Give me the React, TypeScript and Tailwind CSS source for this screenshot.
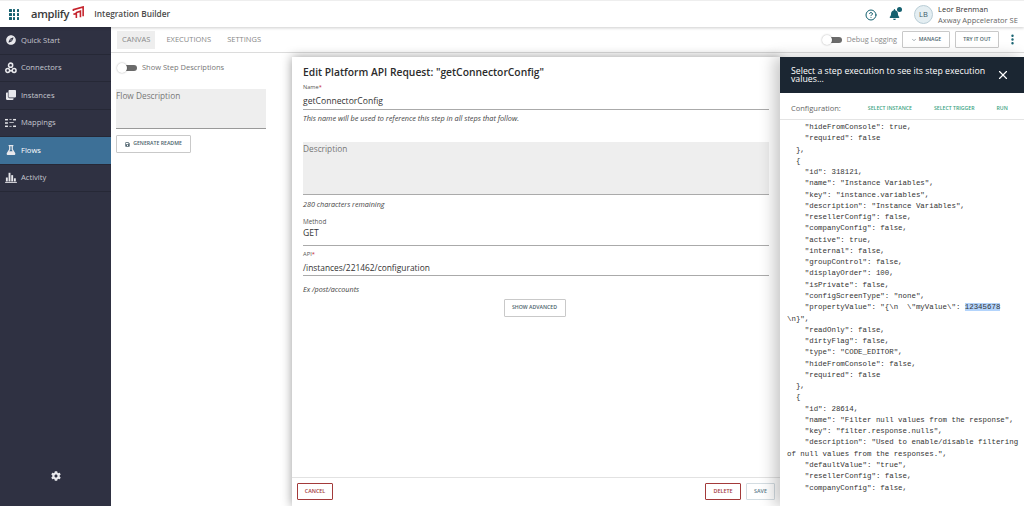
import React from 'react';
import { CircleHelp, X, ChevronDown, EllipsisVertical } from 'lucide-react';
import { FaBell, FaCompass, FaFlask, FaClone, FaCog, FaSave } from 'react-icons/fa';

const GridIcon = () => (
    <div className="grid grid-cols-3 gap-[1.5px] w-[10px]">
        {Array.from({ length: 9 }).map((_, i) => (
            <div key={i} className="w-[2.5px] h-[2.5px] bg-[#14606f] rounded-[0.5px]" />
        ))}
    </div>
);

const AmplifyMark = () => (
    <svg width="13" height="13" viewBox="0 0 13 14" fill="none" stroke="#c5232c" strokeWidth="1.7">
        <path d="M1 5.5 L1 4 L11.5 1 L11.5 11" />
        <path d="M1 9 L4.2 8.2 M4.2 13 L4.2 7 L8.6 5.6 L8.6 12" />
    </svg>
);

const ConnectorsIcon = () => (
    <svg width="12" height="12" viewBox="0 0 15 15" fill="none" stroke="#e8e8ec" strokeWidth="1.9">
        <circle cx="7" cy="4" r="2.6" />
        <circle cx="3.4" cy="10.6" r="2.4" />
        <circle cx="11.4" cy="10.6" r="2.4" />
        <path d="M5.6 11 H9" />
    </svg>
);

const MappingsIcon = () => (
    <svg width="11" height="10" viewBox="0 0 15 13" fill="#e8e8ec">
        <rect x="0" y="1" width="4" height="2" />
        <rect x="0" y="5.5" width="4" height="2" />
        <rect x="0" y="10" width="4" height="2" />
        <rect x="11" y="1" width="4" height="2" />
        <rect x="11" y="10" width="4" height="2" />
        <rect x="6" y="1" width="3" height="1" />
        <rect x="6" y="5.5" width="6" height="1" />
        <rect x="6" y="10.5" width="3" height="1" />
    </svg>
);

const ActivityIcon = () => (
    <svg width="12" height="11" viewBox="0 0 15 14" fill="#e8e8ec">
        <rect x="1" y="7" width="2.4" height="5" />
        <rect x="4.4" y="1" width="2.4" height="11" />
        <rect x="7.8" y="4" width="2.4" height="8" />
        <rect x="11.2" y="8" width="2.4" height="4" />
        <rect x="0" y="12.6" width="15" height="1.2" />
    </svg>
);

const navItems = [
    { label: 'Quick Start', icon: <FaCompass size={10} color="#e8e8ec" /> },
    { label: 'Connectors', icon: <ConnectorsIcon /> },
    { label: 'Instances', icon: <FaClone size={10} color="#e8e8ec" /> },
    { label: 'Mappings', icon: <MappingsIcon /> },
    { label: 'Flows', icon: <FaFlask size={10} color="#e8e8ec" />, active: true },
    { label: 'Activity', icon: <ActivityIcon /> },
];

const Toggle = () => (
    <div className="relative w-[20px] h-[10px] shrink-0">
        <div className="absolute right-0 top-[2px] w-[14px] h-[6px] bg-[#6b6b6b] rounded-r-[3px]" />
        <div className="absolute left-0 top-0 w-[10px] h-[10px] bg-white rounded-full shadow-[0_0_2px_rgba(0,0,0,0.35)]" />
    </div>
);

const jsonLines = [
    '    "hideFromConsole": true,',
    '    "required": false',
    '  },',
    '  {',
    '    "id": 318121,',
    '    "name": "Instance Variables",',
    '    "key": "instance.variables",',
    '    "description": "Instance Variables",',
    '    "resellerConfig": false,',
    '    "companyConfig": false,',
    '    "active": true,',
    '    "internal": false,',
    '    "groupControl": false,',
    '    "displayOrder": 100,',
    '    "isPrivate": false,',
    '    "configScreenType": "none",',
    'HIGHLIGHT',
    '\\n}",',
    '    "readOnly": false,',
    '    "dirtyFlag": false,',
    '    "type": "CODE_EDITOR",',
    '    "hideFromConsole": false,',
    '    "required": false',
    '  },',
    '  {',
    '    "id": 28614,',
    '    "name": "Filter null values from the response",',
    '    "key": "filter.response.nulls",',
    '    "description": "Used to enable/disable filtering',
    'of null values from the responses.",',
    '    "defaultValue": "true",',
    '    "resellerConfig": false,',
    '    "companyConfig": false,',
];

const Required = () => <span className="text-[#c5232c]">*</span>;

const App = () => {
    return (
        <div className="relative w-[1024px] h-[506px] overflow-hidden bg-white text-[#444] font-['Open_Sans',sans-serif]">
            {/* Top bar */}
            <div className="h-[27px] pt-[1px] flex items-center bg-white border-t border-[#eeeeee] shadow-[0_1px_3px_rgba(0,0,0,0.2)] relative z-10">
                <div className="ml-[9px] w-[22px]"><GridIcon /></div>
                <span className="text-[11.2px] font-semibold text-[#3a3a3a] tracking-[-0.3px] -mt-[1px]">amplify</span>
                <div className="ml-[3px] -mt-[4px]"><AmplifyMark /></div>
                <span className="ml-[9px] text-[8.3px] font-semibold text-[#4a4a4a]">Integration Builder</span>
                <div className="ml-auto flex items-center">
                    <CircleHelp size={12} color="#14606f" strokeWidth={2} />
                    <div className="relative ml-[12px]">
                        <FaBell size={11} color="#14606f" />
                        <div className="absolute -top-[2px] -right-[2px] w-[5px] h-[5px] rounded-full bg-[#14606f]" />
                    </div>
                    <div className="ml-[14px] w-[19px] h-[19px] rounded-full bg-[#e4eef2] border border-[#b9cdd6] flex items-center justify-center text-[7.5px] text-[#3a5a68]">LB</div>
                    <div className="ml-[5px] mr-[3px] w-[83px] flex flex-col leading-[10.5px]">
                        <span className="text-[7.5px] text-[#333]">Leor Brenman</span>
                        <span className="text-[7.5px] text-[#666]">Axway Appcelerator SE</span>
                    </div>
                </div>
            </div>

            <div className="flex h-[479px]">
                {/* Sidebar */}
                <div className="w-[111px] shrink-0 bg-[#2f3142] flex flex-col relative">
                    {navItems.map((item) => (
                        <div key={item.label} className={`h-[27.5px] flex items-center border-b border-[#262836] ${item.active ? 'bg-[#3d7097]' : ''}`}>
                            <div className="w-[21px] flex justify-center shrink-0">{item.icon}</div>
                            <span className={`text-[7.6px] ${item.active ? 'text-white' : 'text-[#c6c8d0]'}`}>{item.label}</span>
                        </div>
                    ))}
                    <div className="mt-auto mb-[25px] flex justify-center">
                        <FaCog size={10} color="#e8e8ec" />
                    </div>
                </div>

                {/* Main */}
                <div className="flex-1 flex flex-col min-w-0">
                    <div className="h-[26px] flex items-center border-b border-[#dcdcdc] pl-[6px]">
                        <div className="h-[18px] px-[5px] flex items-center bg-[#eeeeee] text-[7.5px] text-[#888]">CANVAS</div>
                        <div className="ml-[11px] text-[7.5px] text-[#888]">EXECUTIONS</div>
                        <div className="ml-[16px] text-[7.5px] text-[#888]">SETTINGS</div>
                        <div className="ml-auto flex items-center mr-[8px]">
                            <Toggle />
                            <span className="ml-[4px] text-[7.3px] text-[#888]">Debug Logging</span>
                            <div className="ml-[5px] w-[48px] h-[17px] border border-[#c9c9c9] rounded-[1px] flex items-center justify-center gap-[2px] text-[5.2px] font-semibold text-[#4a5f6a]">
                                <ChevronDown size={6} color="#4a5f6a" />MANAGE
                            </div>
                            <div className="ml-[5px] w-[44px] h-[17px] border border-[#c9c9c9] rounded-[1px] flex items-center justify-center text-[5.2px] font-semibold text-[#4a5f6a]">TRY IT OUT</div>
                            <EllipsisVertical size={13} color="#14606f" strokeWidth={2.5} className="ml-[7px] -mr-[3px]" />
                        </div>
                    </div>

                    {/* Canvas side panel */}
                    <div className="pl-[5px] pt-[9px]">
                        <div className="flex items-center">
                            <div className="ml-[1px]"><Toggle /></div>
                            <span className="ml-[5px] text-[7.5px] text-[#777]">Show Step Descriptions</span>
                        </div>
                        <div className="mt-[16px] w-[150px] h-[40px] bg-[#eeeeee] border-b border-[#999] pt-[1px] text-[8.3px] text-[#777]">Flow Description</div>
                        <div className="mt-[6px] w-[75px] h-[18px] border border-[#c9c9c9] rounded-[1px] flex items-center justify-center gap-[3px] text-[5.2px] font-semibold text-[#4a5f6a]">
                            <FaSave size={5} color="#4a5f6a" />GENERATE README
                        </div>
                    </div>
                </div>
            </div>

            {/* Edit step modal */}
            <div className="absolute left-[292px] right-[244px] top-[57px] bottom-0 bg-white shadow-[0_0_10px_rgba(0,0,0,0.4)] flex flex-col">
                <div className="flex-1 px-[11px] pt-[8px]">
                    <div className="text-[10.3px] font-semibold text-[#2b2b2b] leading-[15px]">Edit Platform API Request: "getConnectorConfig"</div>
                    <div className="mt-[3px] text-[5.6px] text-[#555] leading-[8px]">Name<Required /></div>
                    <div className="mt-[4px] h-[15px] border-b border-[#aaa] text-[8.6px] text-[#333] leading-[12px]">getConnectorConfig</div>
                    <div className="mt-[4px] text-[7.3px] italic text-[#444] leading-[9px]">This name will be used to reference this step in all steps that follow.</div>
                    <div className="mt-[18.5px] h-[53px] bg-[#eeeeee] border-b border-[#aaa] text-[8.3px] text-[#777] pt-[1px]">Description</div>
                    <div className="mt-[5px] text-[7.2px] italic text-[#444] leading-[9px]">280 characters remaining</div>
                    <div className="mt-[8px] text-[6.4px] text-[#555] leading-[9px]">Method</div>
                    <div className="mt-[1px] h-[19px] border-b border-[#aaa] text-[8.6px] text-[#333] leading-[13px]">GET</div>
                    <div className="mt-[4px] text-[5.8px] text-[#555] leading-[9px]">API<Required /></div>
                    <div className="mt-[2px] h-[15px] border-b border-[#aaa] text-[8.4px] text-[#333] leading-[13px]">/instances/221462/configuration</div>
                    <div className="mt-[9px] text-[7.2px] italic text-[#444] leading-[9px]">Ex /post/accounts</div>
                    <div className="mt-[5px] flex justify-center">
                        <div className="w-[62px] h-[18px] -ml-[3px] border border-[#c9c9c9] rounded-[1px] flex items-center justify-center text-[5.2px] font-semibold text-[#4a5f6a]">SHOW ADVANCED</div>
                    </div>
                </div>
                <div className="h-[29px] border-t border-[#e2e2e2] flex items-center px-[5px] pb-[1px]">
                    <div className="w-[36px] h-[17px] border border-[#a33a3a] rounded-[1px] flex items-center justify-center text-[5.4px] font-semibold text-[#a33a3a]">CANCEL</div>
                    <div className="ml-auto w-[36px] h-[17px] border border-[#a33a3a] rounded-[1px] flex items-center justify-center text-[5.4px] font-semibold text-[#a33a3a]">DELETE</div>
                    <div className="ml-[5px] w-[29px] h-[17px] border border-[#d4dde2] rounded-[1px] flex items-center justify-center text-[5.4px] font-semibold text-[#5a7a8a]">SAVE</div>
                </div>
            </div>

            {/* Step execution panel */}
            <div className="absolute left-[780px] right-0 top-[57px] bottom-0 bg-white flex flex-col shadow-[-6px_0_14px_rgba(0,0,0,0.22)]">
                <div className="h-[36px] shrink-0 bg-[#1b2632] flex items-center pl-[11px] pr-[14px]">
                    <div className="w-[195px] text-[8.75px] text-white leading-[8.5px]">Select a step execution to see its step execution values...</div>
                    <X size={14} color="white" strokeWidth={2} className="ml-auto shrink-0" />
                </div>
                <div className="h-[27px] pt-[5px] shrink-0 flex items-center border-b border-[#e4e4e4] pl-[11px]">
                    <span className="text-[7.5px] text-[#666]">Configuration:</span>
                    <span className="ml-[27px] text-[5.2px] font-semibold text-[#3aa37f]">SELECT INSTANCE</span>
                    <span className="ml-[22px] text-[5.2px] font-semibold text-[#3aa37f]">SELECT TRIGGER</span>
                    <span className="ml-[22px] text-[5.2px] font-semibold text-[#3aa37f]">RUN</span>
                </div>
                <div className="pl-[7px] pt-[2px] overflow-hidden font-['Liberation_Mono',monospace] text-[7.42px] leading-[11.27px] text-[#333]">
                    {jsonLines.map((line, i) =>
                        line === 'HIGHLIGHT' ? (
                            <div key={i} className="whitespace-pre h-[11.27px]">
                                {'    "propertyValue": "{\\n  \\"myValue\\": '}
                                <span className="bg-[#b3d4fc]">12345678</span>
                            </div>
                        ) : (
                            <div key={i} className="whitespace-pre h-[11.27px]">{line}</div>
                        )
                    )}
                </div>
            </div>
        </div>
    );
};

export default App;
